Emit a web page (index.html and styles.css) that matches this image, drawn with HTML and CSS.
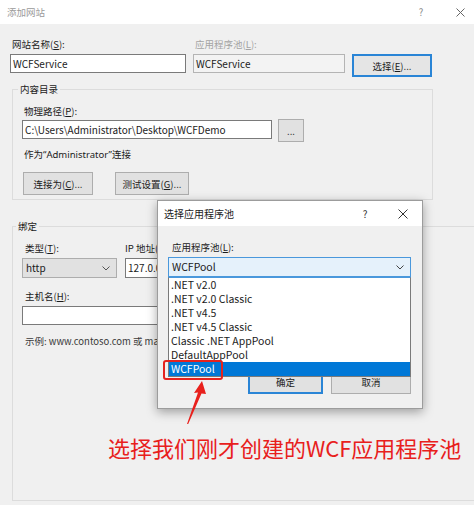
FILE: index.html
```html
<!DOCTYPE html>
<html lang="zh-CN">
<head>
<meta charset="utf-8">
<title>添加网站</title>
<link rel="stylesheet" href="styles.css">
</head>
<body>
<div class="win">
  <div class="titlebar">
    <span class="title">添加网站</span>
    <span class="tb-help">?</span>
    <svg class="tb-close" width="9" height="9" viewBox="0 0 9 9"><path d="M0.5 0.5 L8.5 8.5 M8.5 0.5 L0.5 8.5" stroke="#666" stroke-width="1" fill="none"/></svg>
  </div>
  <div class="body">
    <div class="site-grid">
      <div class="lbl">网站名称(<u>S</u>):</div>
      <div class="lbl lbl-disabled">应用程序池(<u>L</u>):</div>
      <div></div>
      <div class="input">WCFService</div>
      <div class="input input-disabled">WCFService</div>
      <button class="btn btn-default btn-select">选择(<u>E</u>)...</button>
    </div>

    <div class="group group-content">
      <div class="group-title">内容目录</div>
      <div class="lbl lbl-path">物理路径(<u>P</u>):</div>
      <div class="path-row">
        <div class="input input-path">C:\Users\Administrator\Desktop\WCFDemo</div>
        <button class="btn btn-browse">...</button>
      </div>
      <div class="lbl lbl-connect">作为<span class="q">“Administrator”</span>连接</div>
      <div class="btn-row">
        <button class="btn btn-connect">连接为(<u>C</u>)...</button>
        <button class="btn btn-test">测试设置(<u>G</u>)...</button>
      </div>
    </div>

    <div class="group group-binding">
      <div class="group-title group-title-binding">绑定</div>
      <div class="bind-grid">
        <div class="lbl lbl-type">类型(<u>T</u>):</div>
        <div class="lbl">IP 地址(<u>I</u>):</div>
        <div class="select">
          <span>http</span>
          <svg width="8" height="5" viewBox="0 0 8 5"><path d="M0.5 0.5 L4 4 L7.5 0.5" stroke="#555" fill="none"/></svg>
        </div>
        <div class="input input-ip">127.0.0.1</div>
      </div>
      <div class="lbl lbl-host">主机名(<u>H</u>):</div>
      <div class="input input-host"></div>
      <div class="lbl lbl-example">示例: www.contoso.com 或 marketing.contoso.com</div>
    </div>
  </div>

  <div class="pool-dialog">
    <div class="pool-titlebar">
      <span class="pool-title">选择应用程序池</span>
      <span class="pool-help">?</span>
      <svg class="pool-close" width="10" height="10" viewBox="0 0 10 10"><path d="M0.5 0.5 L9.5 9.5 M9.5 0.5 L0.5 9.5" stroke="#333" stroke-width="1" fill="none"/></svg>
    </div>
    <div class="pool-body">
      <div class="lbl lbl-pool">应用程序池(<u>L</u>):</div>
      <div class="combo">
        <span>WCFPool</span>
        <svg width="8" height="5" viewBox="0 0 8 5"><path d="M0.5 0.5 L4 4 L7.5 0.5" stroke="#444" fill="none"/></svg>
        <ul class="combo-list">
          <li>.NET v2.0</li>
          <li>.NET v2.0 Classic</li>
          <li>.NET v4.5</li>
          <li>.NET v4.5 Classic</li>
          <li>Classic .NET AppPool</li>
          <li>DefaultAppPool</li>
          <li class="selected">WCFPool</li>
        </ul>
      </div>
      <div class="pool-buttons">
        <button class="btn btn-ok">确定</button>
        <button class="btn btn-cancel">取消</button>
      </div>
    </div>
  </div>

  <div class="highlight"></div>
  <svg class="arrow" width="30" height="55" viewBox="0 0 30 55">
    <polygon points="22,6 14,18 18,17.5 7,49 8.2,49 21.5,18.5 26,19" fill="#e8201c"/>
  </svg>
  <div class="note">选择我们刚才创建的WCF应用程序池</div>
</div>
</body>
</html>
```

FILE: styles.css
```css
* { box-sizing: border-box; }

html, body {
  margin: 0;
  padding: 0;
}

body {
  width: 474px;
  height: 505px;
  overflow: hidden;
  background: #f0f0f0;
  font-family: "Noto Sans CJK SC", "Noto Sans", sans-serif;
  font-size: 9.5px;
  line-height: 12px;
  color: #1b1b1b;
}

u { text-decoration: underline; text-underline-offset: 1px; }

.win {
  position: relative;
  width: 474px;
  height: 505px;
  display: flex;
  flex-direction: column;
  overflow: hidden;
}

/* ---------- main title bar ---------- */
.titlebar {
  height: 24px;
  flex-shrink: 0;
  background: #fff;
  display: flex;
  align-items: center;
  padding: 0 9px 0 7px;
}
.title { flex: 1; color: #9a9a9a; }
.tb-help { width: 10px; text-align: center; color: #8a8a8a; margin-right: 30px; }

/* ---------- main body ---------- */
.body {
  flex: 1;
  display: flex;
  flex-direction: column;
  padding: 14px 0 4px 10px;
}

.site-grid {
  display: grid;
  grid-template-columns: 176px 152px 80px;
  column-gap: 7px;
  row-gap: 4px;
  align-items: start;
}
.site-grid .lbl { margin-left: 2px; }
.lbl-disabled { color: #a3a3a3; }

.input {
  height: 19px;
  border: 1px solid #7a7a7a;
  background: #fff;
  padding: 0 2px;
  line-height: 17px;
  white-space: nowrap;
  overflow: hidden;
  font-size: 10px;
}
.input-disabled {
  border-color: #b4b4b4;
  background: #f3f3f3;
}

.btn {
  font: inherit;
  color: inherit;
  margin: 0;
  padding: 0;
  background: #e1e1e1;
  border: 1px solid #adadad;
  height: 23px;
  display: flex;
  align-items: center;
  justify-content: center;
  white-space: nowrap;
}
.btn-default {
  border: 2px solid #2a85d6;
  background: #e5e5e5;
}

/* ---------- group boxes ---------- */
.group {
  border: 1px solid #dcdcdc;
  padding: 0 0 0 9px;
}
.group-title {
  width: fit-content;
  margin: -7px 0 0 -4px;
  padding: 0 2px;
  background: #f0f0f0;
}

.group-content {
  margin: 12px 0 0 2px;
  width: 421px;
  padding-bottom: 4px;
}
.lbl-path { margin: 10px 0 0 2px; }
.path-row {
  display: flex;
  align-items: flex-start;
  gap: 6px;
  margin-top: 2px;
}
.input-path { width: 250px; margin-top: 1px; }
.btn-browse { width: 26px; }
.lbl-connect { margin: 6px 0 0 2px; }
.q { font-family: "Noto Sans", sans-serif; }
.btn-row {
  display: flex;
  gap: 22px;
  margin: 11px 0 0 1px;
}
.btn-connect { width: 70px; }
.btn-test { width: 74px; }

.group-binding {
  flex: 1;
  margin: 26px 0 0 2px;
  width: 520px;
}
.group-title-binding { margin-left: -6px; }
.bind-grid {
  display: grid;
  grid-template-columns: 95px 120px;
  column-gap: 8px;
  row-gap: 4px;
  margin-top: 10px;
  align-items: start;
}
.lbl-type { margin-left: 3px; }
.select {
  height: 20px;
  border: 1px solid #adadad;
  background: #e1e1e1;
  display: flex;
  align-items: center;
  justify-content: space-between;
  padding: 0 6px 0 3px;
  font-size: 10px;
}
.input-ip { height: 20px; line-height: 18px; }
.lbl-host { margin: 12px 0 0 3px; }
.input-host { width: 400px; margin-top: 4px; }
.lbl-example { margin: 10px 0 0 3px; color: #3a3a3a; }

/* ---------- pool dialog (window over the main one) ---------- */
.pool-dialog {
  position: absolute;
  left: 157px;
  top: 200px;
  width: 266px;
  height: 209px;
  border: 1px solid #9c9c9c;
  background: #f0f0f0;
  box-shadow: 0 3px 10px rgba(0, 0, 0, 0.35);
  display: flex;
  flex-direction: column;
}
.pool-titlebar {
  height: 25px;
  flex-shrink: 0;
  background: #fff;
  display: flex;
  align-items: center;
  padding: 0 14px 0 6px;
}
.pool-title { flex: 1; font-size: 10px; color: #1b1b1b; }
.pool-help { width: 10px; text-align: center; margin-right: 28px; color: #333; font-size: 10px; }

.pool-body {
  flex: 1;
  padding: 15px 11px 0 10px;
  display: flex;
  flex-direction: column;
}
.lbl-pool { margin-left: 4px; }
.combo {
  position: relative;
  height: 20px;
  margin-top: 4px;
  border: 1px solid #4a98dc;
  background: #e5f1fb;
  display: flex;
  align-items: center;
  justify-content: space-between;
  padding: 0 6px 0 3px;
  font-size: 10.5px;
}
.combo-list {
  position: absolute;
  left: -1px;
  right: -1px;
  top: 19px;
  margin: 0;
  padding: 0;
  list-style: none;
  background: #fff;
  border: 1px solid #7a7a7a;
  border-top-color: #4a98dc;
  z-index: 2;
}
.combo-list li {
  height: 14px;
  line-height: 14px;
  padding-left: 2px;
  font-size: 10.5px;
  white-space: nowrap;
}
.combo-list li.selected {
  background: #0078d7;
  color: #fff;
}

.pool-buttons {
  display: flex;
  justify-content: flex-end;
  gap: 8px;
  margin-top: 93px;
}
.btn-ok { width: 75px; height: 24px; border: 2px solid #2a85d6; }
.btn-cancel { width: 80px; height: 24px; }

/* ---------- annotation overlays ---------- */
.highlight {
  position: absolute;
  left: 163px;
  top: 360px;
  width: 60px;
  height: 20px;
  border: 2px solid #e4231f;
  border-radius: 3px;
  z-index: 3;
}
.arrow {
  position: absolute;
  left: 180px;
  top: 375px;
  z-index: 3;
}
.note {
  position: absolute;
  left: 108px;
  top: 434px;
  font-size: 22px;
  line-height: 26px;
  color: #e8201c;
  white-space: nowrap;
}
```
